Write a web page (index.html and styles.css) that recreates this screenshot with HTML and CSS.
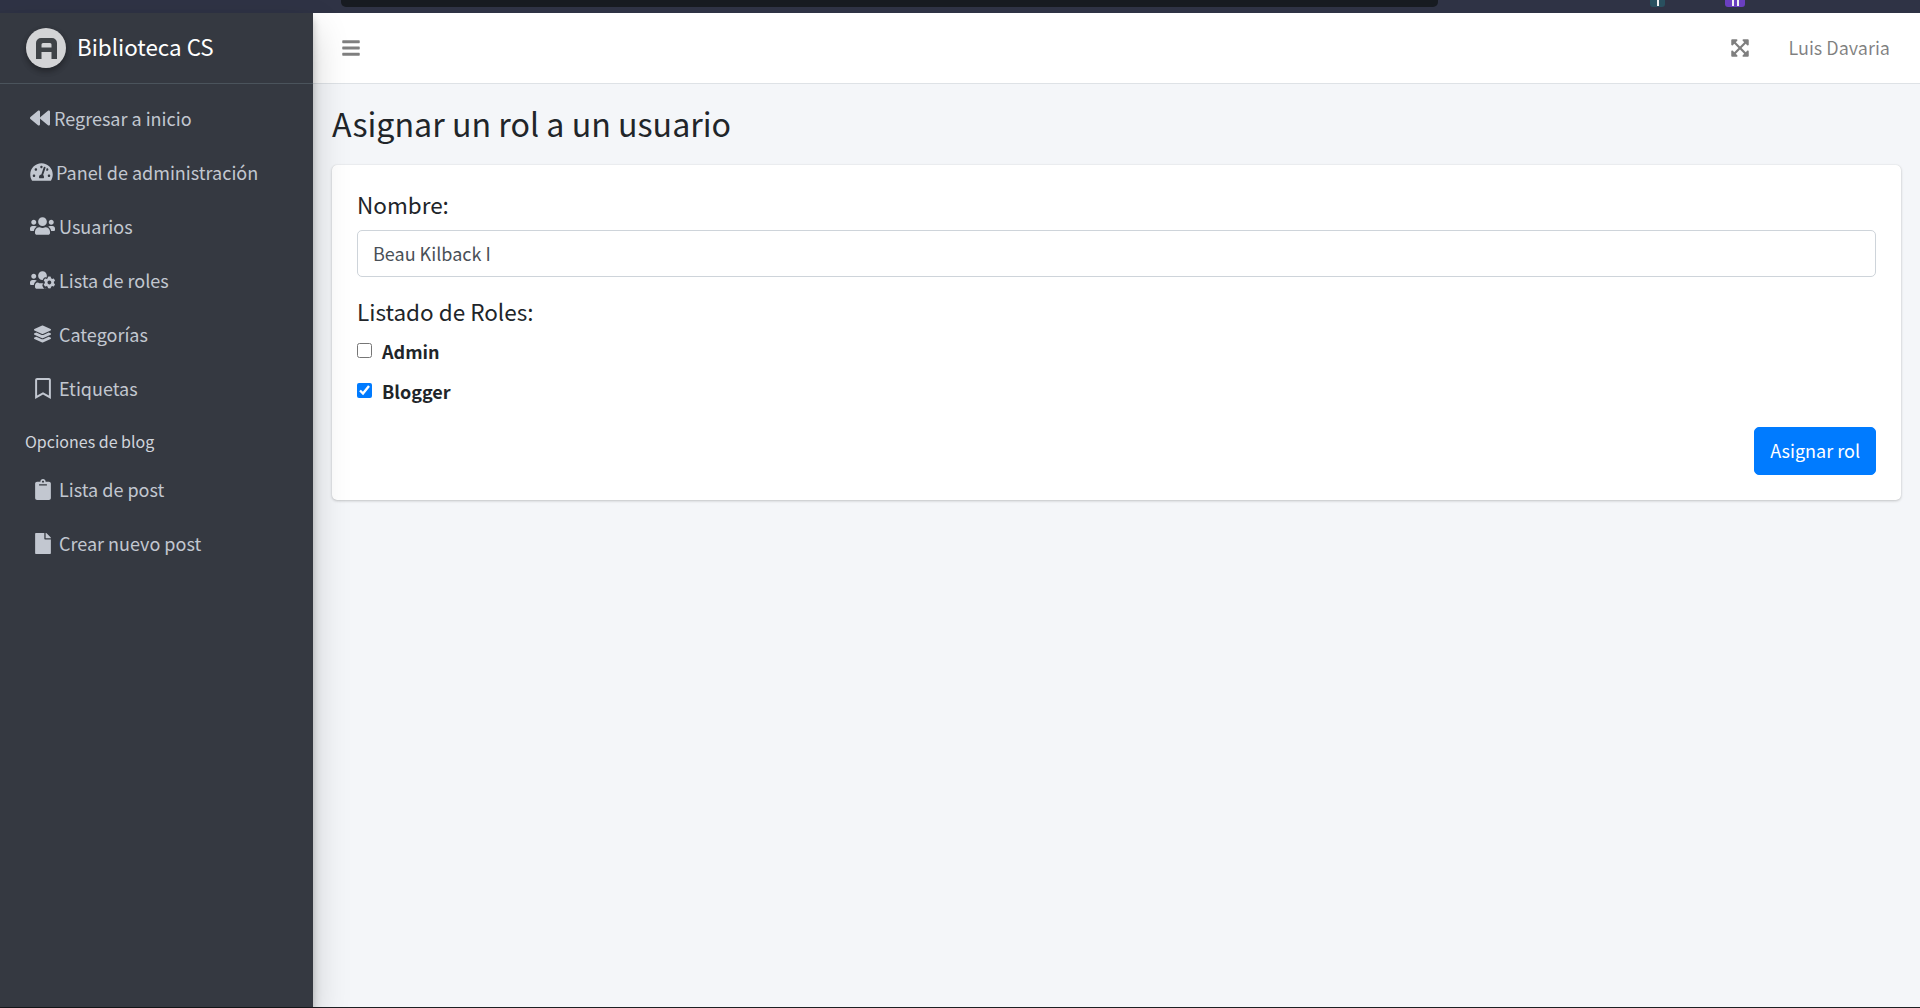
FILE: index.html
```html
<!DOCTYPE html>
<html lang="es">
<head>
<meta charset="utf-8">
<title>Asignar un rol a un usuario</title>
<link rel="stylesheet" href="styles.css">
</head>
<body>
<div class="topstrip">
  <div class="strip-bar"></div>
  <div class="strip-tab tab-teal"><span class="tab-mark"></span></div>
  <div class="strip-tab tab-purple"><span class="tab-mark"></span><span class="tab-mark"></span></div>
</div>
<div class="app">
  <aside class="sidebar">
    <a class="brand" href="#">
      <span class="brand-logo">
        <svg viewBox="0 0 40 40" width="40" height="40"><path class="logo-a" d="M10 31V15a5 5 0 0 1 5-5h11a5 5 0 0 1 5 5v16h-5.500v-7h-10v7zM15.500 19.500h10v-3a1.500 1.500 0 0 0-1.500-1.500h-7a1.500 1.500 0 0 0-1.500 1.500z"/></svg>
      </span>
      <span class="brand-text">Biblioteca CS</span>
    </a>
    <nav class="menu">
      <a class="item" href="#"><svg class="ic ic-back" viewBox="0 0 512 512"><path d="M11.5 280.6l192 160c20.6 17.2 52.5 2.8 52.5-24.6V96c0-27.400-31.900-41.800-52.500-24.600l-192 160c-15.300 12.800-15.300 36.400 0 49.200zm256 0l192 160c20.600 17.200 52.500 2.800 52.500-24.600V96c0-27.400-31.900-41.800-52.500-24.600l-192 160c-15.300 12.800-15.300 36.400 0 49.200z"/></svg>Regresar a inicio</a>
      <a class="item" href="#"><svg class="ic ic-gauge" viewBox="0 0 576 512"><path d="M288 32C128.940 32 0 160.940 0 320c0 52.800 14.250 102.260 39.060 144.800 5.610 9.620 16.300 15.200 27.440 15.200h443c11.140 0 21.830-5.580 27.440-15.200C561.750 422.260 576 372.800 576 320c0-159.060-128.940-288-288-288zm0 64c14.710 0 26.580 10.130 30.320 23.650-1.110 2.260-2.640 4.230-3.450 6.670l-9.220 27.670c-5.130 3.490-10.970 6.010-17.640 6.010-17.670 0-32-14.330-32-32S270.330 96 288 96zM96 384c-17.670 0-32-14.330-32-32s14.330-32 32-32 32 14.330 32 32-14.330 32-32 32zm48-160c-17.670 0-32-14.330-32-32s14.330-32 32-32 32 14.330 32 32-14.330 32-32 32zm246.770-72.410l-61.330 184C343.130 347.330 352 364.540 352 384c0 11.720-3.380 22.550-8.880 32H232.880c-5.500-9.450-8.880-20.280-8.880-32 0-33.940 26.500-61.430 59.900-63.590l61.340-184.010c4.170-12.560 17.730-19.450 30.360-15.170 12.570 4.190 19.350 17.790 15.170 30.360zm14.660 57.200l15.520-46.550c3.470-1.290 7.130-2.230 11.050-2.230 17.670 0 32 14.330 32 32s-14.330 32-32 32c-11.380-.01-20.890-6.280-26.570-15.220zM480 384c-17.670 0-32-14.330-32-32s14.330-32 32-32 32 14.330 32 32-14.330 32-32 32z"/></svg>Panel de administración</a>
      <a class="item" href="#"><svg class="ic ic-wide" viewBox="0 0 640 512"><path d="M96 224c35.300 0 64-28.700 64-64s-28.700-64-64-64-64 28.700-64 64 28.700 64 64 64zm448 0c35.300 0 64-28.700 64-64s-28.700-64-64-64-64 28.700-64 64 28.700 64 64 64zm32 32h-64c-17.600 0-33.500 7.100-45.100 18.600 40.300 22.100 68.900 62 75.100 109.400h66c17.700 0 32-14.300 32-32v-32c0-35.300-28.700-64-64-64zm-256 0c61.900 0 112-50.100 112-112S381.900 32 320 32 208 82.100 208 144s50.100 112 112 112zm76.800 32h-8.300c-20.800 10-43.900 16-68.500 16s-47.600-6-68.500-16h-8.300C179.600 288 128 339.600 128 403.200V432c0 26.500 21.500 48 48 48h288c26.500 0 48-21.500 48-48v-28.800c0-63.600-51.600-115.200-115.200-115.200zm-223.700-13.400C161.500 263.100 145.600 256 128 256H64c-35.300 0-64 28.700-64 64v32c0 17.700 14.300 32 32 32h65.900c6.300-47.400 34.900-87.300 75.200-109.400z"/></svg>Usuarios</a>
      <a class="item" href="#"><svg class="ic ic-wide" viewBox="0 0 640 512"><path d="M610.500 341.300c2.600-14.100 2.600-28.500 0-42.600l25.800-14.900c3-1.700 4.300-5.200 3.300-8.500-6.700-21.600-18.200-41.200-33.200-57.400-2.300-2.500-6-3.100-9-1.400l-25.800 14.900c-10.900-9.300-23.400-16.500-36.900-21.300v-29.800c0-3.400-2.400-6.400-5.700-7.100-22.300-5-45-4.800-66.200 0-3.300.7-5.700 3.700-5.700 7.100v29.800c-13.500 4.800-26 12-36.900 21.300l-25.800-14.900c-2.900-1.700-6.700-1.100-9 1.400-15 16.200-26.500 35.800-33.200 57.400-1 3.300.4 6.800 3.300 8.500l25.800 14.900c-2.600 14.100-2.600 28.500 0 42.600l-25.800 14.900c-3 1.700-4.300 5.200-3.300 8.500 6.700 21.600 18.200 41.100 33.200 57.400 2.300 2.500 6 3.100 9 1.400l25.800-14.900c10.900 9.300 23.400 16.500 36.900 21.300v29.800c0 3.400 2.400 6.400 5.700 7.100 22.300 5 45 4.800 66.200 0 3.300-.7 5.700-3.700 5.700-7.100v-29.800c13.500-4.800 26-12 36.900-21.300l25.800 14.900c2.900 1.700 6.700 1.100 9-1.400 15-16.200 26.500-35.800 33.200-57.400 1-3.300-.4-6.800-3.300-8.500l-25.800-14.900zM496 368.500c-26.800 0-48.500-21.800-48.500-48.500s21.800-48.500 48.500-48.500 48.500 21.800 48.500 48.500-21.700 48.500-48.500 48.500zM96 224c35.300 0 64-28.700 64-64s-28.700-64-64-64-64 28.700-64 64 28.700 64 64 64zm224 32c1.900 0 3.700-.5 5.600-.6 8.300-21.700 20.500-42.100 36.300-59.200 7.400-8 17.900-12.600 28.900-12.600 6.900 0 13.700 1.800 19.600 5.300l7.900 4.600c.8-.5 1.600-.9 2.400-1.400 7-14.600 11.200-30.800 11.200-48 0-61.900-50.100-112-112-112S208 82.100 208 144c0 61.900 50.100 112 112 112zm91.700 225.900c-1.700-.9-3.300-1.900-5-2.900-6.200 3.700-12.900 6-20.100 6-11 0-21.500-4.600-28.900-12.600-18.100-19.500-31.900-43.300-39.700-68.700-5-16.100 1.800-33.800 16.400-42.300l7.900-4.600c-.1-2-.1-4-.1-6l-8-4.600c-4.100-2.400-7.600-5.500-10.500-9.100H243.200C179.600 288 128 339.600 128 403.200V432c0 26.500 21.500 48 48 48h240c-2.700-5.300-4.300-11.500-4.300-17.900zM173.100 274.600C161.500 263.100 145.600 256 128 256H64c-35.300 0-64 28.700-64 64v32c0 17.700 14.300 32 32 32h65.900c6.300-47.400 34.900-87.300 75.200-109.400z"/></svg>Lista de roles</a>
      <a class="item" href="#"><span class="ic-box"><svg class="ic ic-mid" viewBox="0 0 512 512"><path d="M12.410 148.020l232.940 105.670c6.800 3.090 14.490 3.090 21.290 0l232.940-105.670c16.550-7.510 16.550-32.520 0-40.030L266.650 2.310a25.607 25.607 0 0 0-21.290 0L12.410 107.980c-16.550 7.510-16.550 32.530 0 40.040zm487.180 88.280l-58.090-26.330-161.640 73.270c-7.560 3.430-15.590 5.170-23.860 5.170s-16.290-1.740-23.860-5.170L70.510 209.970l-58.100 26.330c-16.550 7.500-16.550 32.500 0 40l232.940 105.590c6.800 3.080 14.490 3.080 21.290 0L499.590 276.300c16.550-7.500 16.550-32.500 0-40zm0 127.800l-57.870-26.230-161.860 73.370c-7.560 3.430-15.590 5.170-23.860 5.170s-16.290-1.740-23.860-5.170L70.290 337.870 12.410 364.100c-16.550 7.500-16.550 32.500 0 40l232.940 105.590c6.800 3.080 14.490 3.080 21.290 0L499.590 404.100c16.550-7.500 16.550-32.500 0-40z"/></svg></span>Categorías</a>
      <a class="item" href="#"><span class="ic-box"><svg class="ic ic-tall" viewBox="0 0 384 512"><path d="M336 0H48C21.490 0 0 21.490 0 48v464l192-112 192 112V48c0-26.510-21.490-48-48-48zm0 428.430l-144-84-144 84V54a6 6 0 0 1 6-6h276c3.314 0 6 2.683 6 5.996V428.430z"/></svg></span>Etiquetas</a>
      <div class="menu-header">Opciones de blog</div>
      <a class="item" href="#"><span class="ic-box"><svg class="ic ic-tall" viewBox="0 0 384 512"><path d="M384 112v352c0 26.510-21.490 48-48 48H48c-26.510 0-48-21.490-48-48V112c0-26.510 21.490-48 48-48h80c0-35.290 28.710-64 64-64s64 28.710 64 64h80c26.510 0 48 21.490 48 48zM192 40c-13.255 0-24 10.745-24 24s10.745 24 24 24 24-10.745 24-24-10.745-24-24-24m96 114v-20a6 6 0 0 0-6-6H102a6 6 0 0 0-6 6v20a6 6 0 0 0 6 6h180a6 6 0 0 0 6-6z"/></svg></span>Lista de post</a>
      <a class="item" href="#"><span class="ic-box"><svg class="ic ic-tall" viewBox="0 0 384 512"><path d="M224 136V0H24C10.700 0 0 10.700 0 24v464c0 13.300 10.700 24 24 24h336c13.300 0 24-10.700 24-24V160H248c-13.200 0-24-10.800-24-24zm160-14.100v6.100H256V0h6.100c6.400 0 12.500 2.500 17 7l97.900 98c4.500 4.500 7 10.600 7 16.900z"/></svg></span>Crear nuevo post</a>
    </nav>
  </aside>
  <div class="main">
    <header class="navbar">
      <a class="nav-bars" href="#"><svg class="nav-ic" viewBox="0 0 448 512"><path d="M16 132h416c8.837 0 16-7.163 16-16V76c0-8.837-7.163-16-16-16H16C7.163 60 0 67.163 0 76v40c0 8.837 7.163 16 16 16zm0 160h416c8.837 0 16-7.163 16-16v-40c0-8.837-7.163-16-16-16H16c-8.837 0-16 7.163-16 16v40c0 8.837 7.163 16 16 16zm0 160h416c8.837 0 16-7.163 16-16v-40c0-8.837-7.163-16-16-16H16c-8.837 0-16 7.163-16 16v40c0 8.837 7.163 16 16 16z"/></svg></a>
      <a class="nav-expand" href="#"><svg class="nav-ic" viewBox="0 0 448 512"><path d="M448 344v112a23.940 23.940 0 0 1-24 24H312c-21.390 0-32.090-25.900-17-41l36.200-36.200L224 295.600 116.770 402.900 153 439c15.090 15.100 4.390 41-17 41H24a23.940 23.940 0 0 1-24-24V344c0-21.400 25.890-32.100 41-17l36.190 36.200L184.460 256 77.180 148.700 41 185c-15.100 15.100-41 4.400-41-17V56a23.940 23.940 0 0 1 24-24h112c21.390 0 32.090 25.900 17 41l-36.200 36.200L224 216.400l107.230-107.300L295 73c-15.090-15.100-4.390-41 17-41h112a23.940 23.940 0 0 1 24 24v112c0 21.400-25.890 32.100-41 17l-36.190-36.200L263.540 256l107.280 107.300L407 327.100c15.100-15.200 41-4.500 41 16.900z"/></svg></a>
      <span class="nav-user">Luis Davaria</span>
    </header>
    <main class="content">
      <h1 class="title">Asignar un rol a un usuario</h1>
      <form class="card">
        <label class="label" for="nombre">Nombre:</label>
        <input class="input" id="nombre" type="text" value="Beau Kilback I">
        <div class="label label-roles">Listado de Roles:</div>
        <label class="check"><input type="checkbox"><span>Admin</span></label>
        <label class="check"><input type="checkbox" checked><span>Blogger</span></label>
        <div class="actions"><button class="btn" type="button">Asignar rol</button></div>
      </form>
    </main>
  </div>
</div>
<div class="bottomstrip"></div>
</body>
</html>
```
FILE: styles.css
```css
* { box-sizing: border-box; }
html, body { height: 100%; }
body {
  margin: 0;
  display: flex;
  flex-direction: column;
  overflow: hidden;
  font-family: "Noto Sans CJK SC", "Noto Sans", sans-serif;
  font-size: 18px;
  line-height: 27px;
  color: #212529;
  background: #f4f6f9;
}
a { text-decoration: none; color: inherit; }

.topstrip {
  flex: 0 0 13px;
  display: flex;
  align-items: flex-start;
  padding-left: 341px;
  background: #2f3345;
}
.strip-bar {
  width: 1097px;
  height: 7px;
  background: #171b21;
  border-radius: 0 0 5px 5px;
}
.strip-tab {
  height: 7px;
  border-radius: 0 0 3px 3px;
  display: flex;
  justify-content: center;
  gap: 3px;
}
.tab-teal { width: 15px; margin-left: 212px; background: #29505f; }
.tab-purple { width: 20px; margin-left: 60px; background: #6a3fc0; }
.tab-mark { width: 2px; height: 6px; background: #f0f0f0; }

.app { flex: 1 1 auto; display: flex; min-height: 0; }
.bottomstrip { flex: 0 0 1px; background: #1d2024; }

.sidebar {
  flex: 0 0 313px;
  background: #353941;
  position: relative;
  z-index: 2;
  box-shadow: 0 17px 35px rgba(0,0,0,.19), 0 6px 8px rgba(0,0,0,.23);
}
.brand {
  height: 71px;
  display: flex;
  align-items: center;
  gap: 11px;
  padding: 0 0 2px 26px;
  border-bottom: 1px solid #4b545c;
  color: #fff;
  font-size: 22.400px;
}
.brand-logo {
  width: 40px;
  height: 40px;
  margin-top: 2px;
  border-radius: 50%;
  background: #d3d4d6;
  box-shadow: 0 3px 6px rgba(0,0,0,.16), 0 3px 6px rgba(0,0,0,.23);
  line-height: 0;
}
.logo-a { fill: #3f4347; fill-rule: evenodd; }
.brand-text { line-height: 34px; margin-bottom: 3px; }

.menu { padding-top: 7px; display: flex; flex-direction: column; }
.item {
  height: 54px;
  display: flex;
  align-items: center;
  padding-left: 30px;
  color: #c2c7d0;
}
.ic { fill: #c2c7d0; display: block; flex: none; }
.ic-back { width: 22px; height: 20px; margin: 0 3px 0 -1px; }
.ic-gauge { width: 23px; height: 20px; margin-right: 3px; }
.ic-wide { width: 25px; height: 20px; margin-right: 4px; }
.ic-box { width: 29px; flex: none; display: flex; justify-content: center; padding: 0 5px 0 1px; }
.ic-mid { width: 17px; height: 18px; }
.ic-tall { width: 16px; height: 21px; }
.menu-header {
  height: 48px;
  padding: 14px 0 0 25px;
  font-size: 16px;
  color: #d0d4db;
  line-height: 24px;
  margin-bottom: -1px;
}

.main { flex: 1 1 auto; min-width: 0; display: flex; flex-direction: column; }
.navbar {
  height: 71px;
  flex: none;
  display: flex;
  align-items: center;
  background: #fff;
  border-bottom: 1px solid #dee2e6;
  padding: 0 30px 0 29px;
}
.nav-ic { display: block; width: 18px; height: 20px; fill: rgba(0,0,0,.5); }
.nav-expand { margin-left: auto; margin-right: 39px; }
.nav-user { color: rgba(0,0,0,.5); margin-bottom: 2px; }

.content { padding: 0 19px 0 19px; }
.title {
  margin: 0;
  padding-top: 19px;
  height: 81px;
  font-size: 32.200px;
  font-weight: 400;
  line-height: 40px;
}
.card {
  background: #fff;
  border-radius: 5px;
  box-shadow: 0 0 1px rgba(0,0,0,.13), 0 1px 3px rgba(0,0,0,.2);
  padding: 22px 25px 25px;
  height: 335px;
  display: flex;
  flex-direction: column;
}
.label { font-size: 22.500px; line-height: 34px; margin-bottom: 9px; display: block; }
.input {
  height: 47px;
  width: 100%;
  flex: none;
  padding: 0 15px 2px;
  border: 1px solid #ced4da;
  border-radius: 5px;
  font: inherit;
  color: #495057;
  background: #fff;
}
.label-roles { margin: 17px 0 3px; }
.check {
  height: 40px;
  display: flex;
  align-items: center;
  font-weight: 700;
}
.check input {
  width: 15px;
  height: 15px;
  margin: 0 10px 2px 0;
  accent-color: #007bff;
}
.actions { margin-top: auto; display: flex; justify-content: flex-end; }
.btn {
  height: 48px;
  padding: 0 15px 2px;
  border: 1px solid #007bff;
  border-radius: 5px;
  background: #007bff;
  color: #fff;
  font: inherit;
}
```
